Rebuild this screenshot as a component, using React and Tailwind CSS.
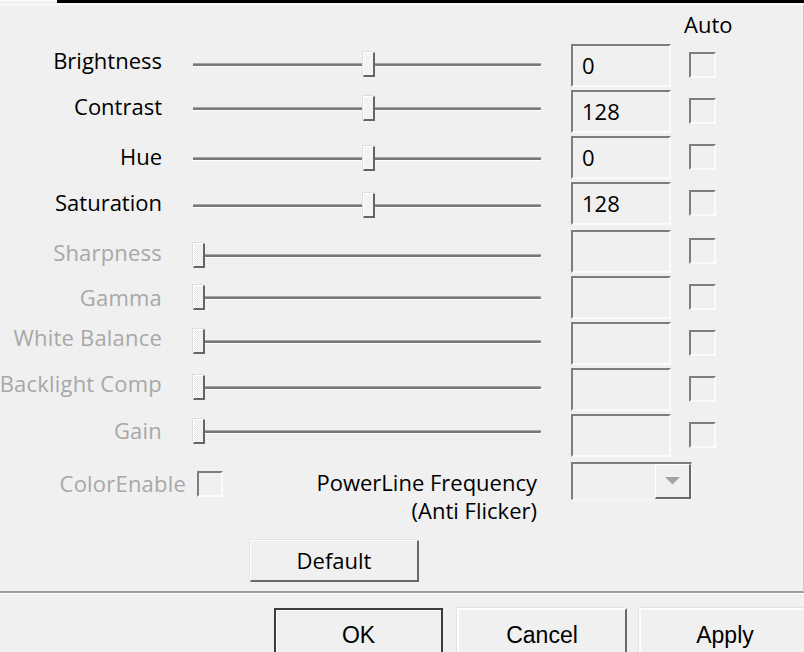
import React from 'react';

const rows = [
  { name: 'Brightness', value: '0', pos: 170, on: true, lt: 'pt-[3px]', st: 'pt-[8px]', gap: '' },
  { name: 'Contrast', value: '128', pos: 170, on: true, lt: 'pt-[3px]', st: 'pt-[6px]', gap: '' },
  { name: 'Hue', value: '0', pos: 170, on: true, lt: 'pt-[7px]', st: 'pt-[10px]', gap: '' },
  { name: 'Saturation', value: '128', pos: 170, on: true, lt: 'pt-[7px]', st: 'pt-[11px]', gap: '' },
  { name: 'Sharpness', value: '', pos: 0, on: false, lt: 'pt-[9px]', st: 'pt-[13px]', gap: 'mt-[2px]' },
  { name: 'Gamma', value: '', pos: 0, on: false, lt: 'pt-[8px]', st: 'pt-[9px]', gap: '' },
  { name: 'White Balance', value: '', pos: 0, on: false, lt: 'pt-[2px]', st: 'pt-[7px]', gap: '' },
  { name: 'Backlight Comp', value: '', pos: 0, on: false, lt: 'pt-[2px]', st: 'pt-[7px]', gap: '' },
  { name: 'Gain', value: '', pos: 0, on: false, lt: 'pt-[3px]', st: 'pt-[5px]', gap: '' },
];

const Sunken = ({ className = '', children }) => (
  <div
    className={`shrink-0 border-2 border-t-[#7d7d7d] border-l-[#7d7d7d] border-r-[#fbfbfb] border-b-[#fbfbfb] ${className}`}
  >
    {children}
  </div>
);

const Slider = ({ pos, on, className }) => (
  <div className={`shrink-0 ml-[31px] w-[348px] ${className}`}>
    <div className="relative h-[25px]">
      <div className="pt-[11px]">
        <div className="h-[3px] bg-[#787878] border-t border-t-[#a5a5a5] rounded-r-[1px]" />
        <div className="h-px bg-white" />
      </div>
      <div
        className={`absolute top-0 h-[25px] w-[12px] border-l border-t border-l-white border-t-white border-r-2 border-b-2 border-r-[#656565] border-b-[#656565] shadow-[-1px_-1px_0_#dedede] ${
          on
            ? 'bg-[#f3f3f3]'
            : 'bg-[repeating-conic-gradient(#ffffff_0%_25%,#e2e2e2_0%_50%)] bg-[length:2px_2px]'
        }`}
        style={{ left: pos }}
      />
    </div>
  </div>
);

const Row = ({ row }) => (
  <div className={`flex items-start h-[46px] ${row.gap}`}>
    <div
      className={`shrink-0 w-[162px] flex justify-end whitespace-nowrap text-[22px] leading-[26px] ${row.lt} ${
        row.on ? 'text-black font-medium' : 'text-[#a8a8a8] tracking-[0.2px]'
      }`}
    >
      {row.name}
    </div>
    <Slider pos={row.pos} on={row.on} className={row.st} />
    <Sunken className="ml-[30px] w-[100px] h-[43px] flex items-center pl-[9px] text-[22px] font-medium">
      {row.value}
    </Sunken>
    <Sunken className="ml-[18px] mt-[8px] w-[27px] h-[26px]" />
  </div>
);

const DlgButton = ({ label, isDefault, className }) => (
  <div
    className={`shrink-0 h-[50px] flex justify-center pt-[12px] text-[23px] leading-[26px] font-['Liberation_Sans',Arial,sans-serif] ${
      isDefault
        ? 'border-2 border-[#3c3c3c] shadow-[inset_1px_1px_0_#ffffff]'
        : 'border-l-2 border-t-2 border-l-[#fdfdfd] border-t-[#fdfdfd] border-r-2 border-r-[#6a6a6a] shadow-[-1px_-1px_0_#e3e3e3]'
    } ${className}`}
  >
    {label}
  </div>
);

export default function App() {
  return (
    <div className="w-[804px] h-[652px] overflow-hidden bg-[#f0f0f0] font-['Open_Sans',sans-serif] text-black select-none">
      <div className="flex h-[4px]">
        <div className="w-[57px] border-t border-t-[#fafafa]" />
        <div className="flex-1 h-[3px] bg-black" />
      </div>

      <div className="h-[589px] border-t border-t-white border-r border-r-[#cacaca] border-b-2 border-b-[#9d9d9d] flex flex-col">
        <div className="mt-[5px] h-[28px] leading-[28px] pl-[684px] text-[22px] font-medium">Auto</div>

        <div className="mt-[6px] flex flex-col">
          {rows.map((r) => (
            <Row key={r.name} row={r} />
          ))}
        </div>

        <div className="mt-[2px] h-[78px] flex items-start">
          <div className="shrink-0 w-[186px] flex justify-end pt-[7px] leading-[28px] text-[22px] text-[#a8a8a8] tracking-[0.2px] whitespace-nowrap">
            ColorEnable
          </div>
          <Sunken className="ml-[11px] mt-[9px] w-[26px] h-[26px]" />
          <div className="shrink-0 w-[314px] text-right pt-[6px] leading-[28px] text-[22px] font-medium whitespace-nowrap">
            <div>PowerLine Frequency</div>
            <div>(Anti Flicker)</div>
          </div>
          <div className="shrink-0 ml-[34px] w-[121px] h-[38px] flex border-t-2 border-l-2 border-t-[#7d7d7d] border-l-[#7d7d7d] border-r border-b border-r-[#f8f8f8] border-b-[#f8f8f8]">
            <div className="flex-1" />
            <div className="w-[36px] h-full flex items-center justify-center border-l border-t border-l-white border-t-white border-r-2 border-b-2 border-r-[#6a6a6a] border-b-[#6a6a6a]">
              <svg width="15" height="8" viewBox="0 0 15 8">
                <polygon points="0,0 15,0 7.5,7.5" fill="#a3a3a3" />
              </svg>
            </div>
          </div>
        </div>

        <div className="ml-[250px] w-[169px] h-[42px] flex items-center justify-center text-[22px] font-medium border-l border-t border-l-[#fdfdfd] border-t-[#fdfdfd] border-r-2 border-b-2 border-r-[#6a6a6a] border-b-[#6a6a6a] shadow-[-1px_-1px_0_#e3e3e3]">
          Default
        </div>
      </div>
      <div className="h-px bg-white" />

      <div className="mt-[14px] flex pl-[274px]">
        <DlgButton label="OK" isDefault className="w-[169px]" />
        <DlgButton label="Cancel" className="ml-[14px] w-[170px]" />
        <DlgButton label="Apply" className="ml-[12px] w-[172px]" />
      </div>
    </div>
  );
}
